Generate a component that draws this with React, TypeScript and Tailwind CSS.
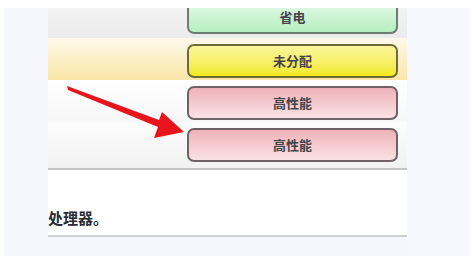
const cjk = "font-['Noto_Sans_CJK_SC','Noto_Sans',sans-serif]";

function ModeButton({ label, tone }: { label: string; tone: "green" | "yellow" | "pink" }) {
  const bg =
    tone === "green"
      ? "bg-gradient-to-b from-[#e6f9e8] to-[#b4efc0] border-[#6f7c74]"
      : tone === "yellow"
        ? "bg-gradient-to-b from-[#fbf59a] to-[#f3ea08] border-[#6e6a3a]"
        : "bg-gradient-to-b from-[#eeb2b8] to-[#f9e2e4] border-[#6f6266]";
  return (
    <div
      className={`w-[211px] h-[34px] rounded-[7px] border-2 ${bg} flex items-center justify-center text-[13px] font-semibold text-[#444448] ${cjk}`}
    >
      {label}
    </div>
  );
}

export default function App() {
  return (
    <div className="w-[474px] h-[258px] bg-white overflow-hidden pt-[8px] pl-[4px]">
      <div className="flex h-[248px]">
        <div className="w-[44px] bg-[#f5f7fc]" />
        <div className="relative w-[359px] bg-white flex flex-col">
          <div className="h-[30px] bg-gradient-to-b from-[#f2f2f2] to-[#ebebeb] pl-[139px] overflow-hidden">
            <div className="-mt-[8px]">
              <ModeButton label="省电" tone="green" />
            </div>
          </div>
          <div className="h-[42px] bg-gradient-to-b from-[#fdf8ea] to-[#fbe6a8] pl-[139px] pt-[6px]">
            <ModeButton label="未分配" tone="yellow" />
          </div>
          <div className="h-[42px] bg-gradient-to-b from-white to-[#f7f7f7] pl-[139px] pt-[6px]">
            <ModeButton label="高性能" tone="pink" />
          </div>
          <div className="h-[46px] bg-gradient-to-b from-[#fcfcfc] to-[#f2f2f2] pl-[139px] pt-[6px]">
            <ModeButton label="高性能" tone="pink" />
          </div>
          <div className="h-[2px] bg-[#c4c4c4]" />
          <div className="h-[65px] bg-white flex items-end pb-[10px]">
            <span className={`text-[15px] font-bold text-[#2b2b33] leading-none ${cjk}`}>处理器。</span>
          </div>
          <div className="h-[2px] bg-[#d0d0d0]" />
          <div className="flex-1 bg-[#f5f7fc]" />

          <svg className="absolute left-0 top-0" width="359" height="248" viewBox="0 0 359 248">
            <polygon
              points="19,78 20,82 110,119 106,130 136,124 114,104 111,112"
              fill="#e8141c"
            />
          </svg>
        </div>
        <div className="w-[63px] bg-[#f7f8fd]" />
      </div>
    </div>
  );
}
